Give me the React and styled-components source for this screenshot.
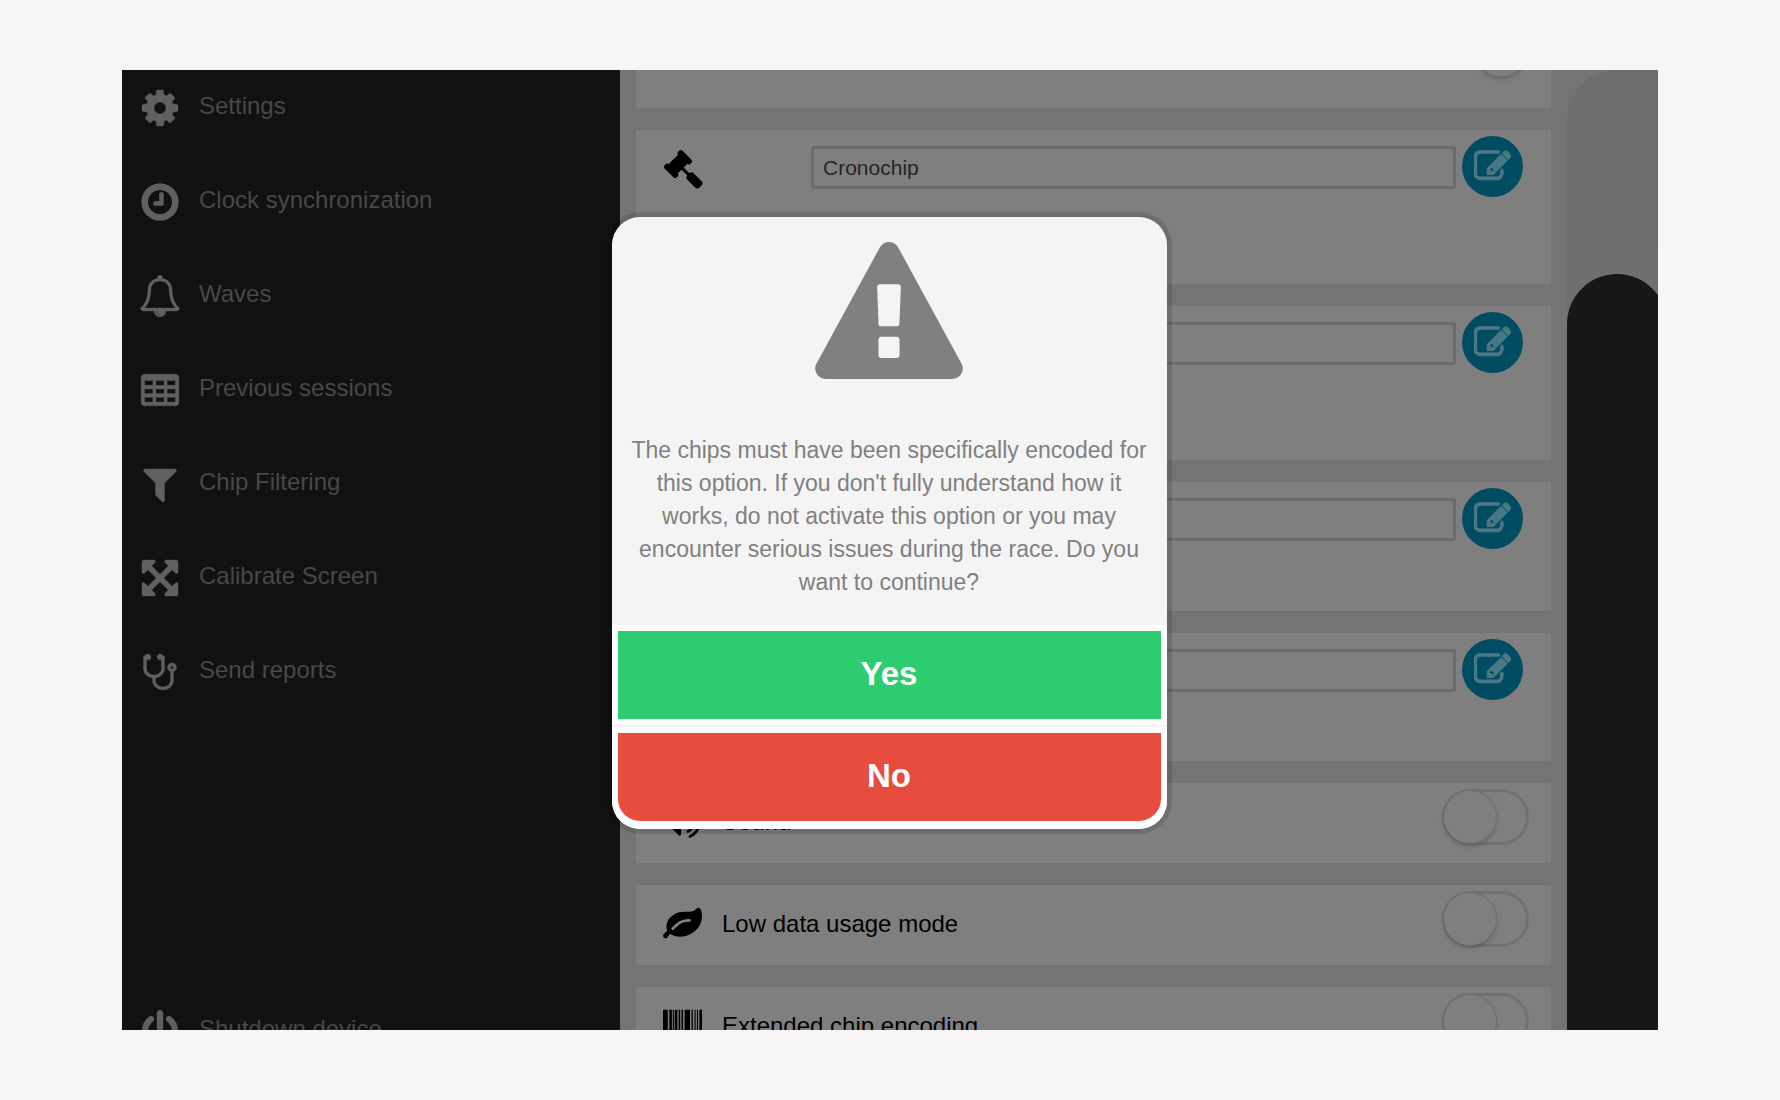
import React from "react";
import styled, { createGlobalStyle, css } from "styled-components";

const GlobalStyle = createGlobalStyle`
  *, *::before, *::after { box-sizing: border-box; }
  body {
    margin: 0;
    background: #f7f5f6;
    font-family: "Liberation Sans", Arial, sans-serif;
  }
  button, input { font: inherit; }
`;

const paths = {
  cog: "M1152 896q0-106-75-181t-181-75-181 75-75 181 75 181 181 75 181-75 75-181zm512-109v222q0 12-8 23t-20 13l-185 28q-19 54-39 91 35 50 107 138 10 12 10 25t-9 23q-27 37-99 108t-94 71q-12 0-26-9l-138-108q-44 23-91 38-16 136-29 186-7 28-36 28h-222q-14 0-24.500-8.500t-11.500-21.500l-28-184q-49-16-90-37l-141 107q-10 9-25 9-14 0-25-11-126-114-165-168-7-10-7-23 0-12 8-23 15-21 51-66.500t54-70.500q-27-50-41-99l-183-27q-13-2-21-12.500t-8-23.500v-222q0-12 8-23t19-13l186-28q14-46 39-92-40-57-107-138-10-12-10-24 0-10 9-23 26-36 98.500-107.500t94.500-71.500q13 0 26 10l138 107q44-23 91-38 16-136 29-186 7-28 36-28h222q14 0 24.500 8.500t11.500 21.500l28 184q49 16 90 37l142-107q9-9 24-9 13 0 25 10 129 119 165 170 7 8 7 22 0 12-8 23-15 21-51 66.500t-54 70.500q26 50 41 98l183 28q13 2 21 12.500t8 23.500z",
  clock: "M1024 544v448q0 14-9 23t-23 9h-320q-14 0-23-9t-9-23v-64q0-14 9-23t23-9h224v-352q0-14 9-23t23-9h64q14 0 23 9t9 23zm416 352q0-148-73-273t-198-198-273-73-273 73-198 198-73 273 73 273 198 198 273 73 273-73 198-198 73-273zm224 0q0 209-103 385.500t-279.500 279.500-385.500 103-385.500-103-279.500-279.500-103-385.500 103-385.500 279.500-279.500 385.500-103 385.500 103 279.500 279.500 103 385.500z",
  bell: "M912 1696q0-16-16-16-59 0-101.500-42.500t-42.500-101.500q0-16-16-16t-16 16q0 73 51.500 124.500t124.500 51.500q16 0 16-16zm-666-288h1300q-266-300-266-832 0-51-24-105t-69-103-121.500-80.500-169.500-31.500-169.500 31.500-121.500 80.500-69 103-24 105q0 532-266 832zm1482 0q0 52-38 90t-90 38h-448q0 106-75 181t-181 75-181-75-75-181h-448q-52 0-90-38t-38-90q50-42 91-88t85-119.500 74.500-158.500 50-206 19.500-260q0-152 117-282.500t307-158.500q-8-19-8-39 0-40 28-68t68-28 68 28 28 68q0 20-8 39 190 28 307 158.500t117 282.500q0 139 19.500 260t50 206 74.500 158.500 85 119.500 91 88z",
  table: "M1700 361v1070q0 58-41 99t-99 41h-1328q-58 0-99-41t-41-99v-1070q0-58 41-99t99-41h1328q58 0 99 41t41 99zM240 490v200h352v-200zM720 490v200h352v-200zM1200 490v200h352v-200zM240 850v200h352v-200zM720 850v200h352v-200zM1200 850v200h352v-200zM240 1210v200h352v-200zM720 1210v200h352v-200zM1200 1210v200h352v-200z",
  filter: "M1595 295q17 41-14 70l-493 493v742q0 42-39 59-13 5-25 5-27 0-45-19l-256-256q-19-19-19-45v-486l-493-493q-31-29-14-70 17-39 59-39h1280q42 0 59 39z",
  arrows: "M1411 541l-355 355 355 355 144-144q29-31 70-14 39 17 39 59v448q0 26-19 45t-45 19h-448q-42 0-59-40-17-39 14-69l144-144-355-355-355 355 144 144q31 30 14 69-17 40-59 40h-448q-26 0-45-19t-19-45v-448q0-42 40-59 39-17 69 14l144 144 355-355-355-355-144 144q-19 19-45 19-12 0-24-5-40-17-40-59v-448q0-26 19-45t45-19h448q42 0 59 40 17 39-14 69l-144 144 355 355 355-355-144-144q-31-30-14-69 17-40 59-40h448q26 0 45 19t19 45v448q0 42-39 59-13 5-25 5-26 0-45-19z",
  stethoscope: "M1472 704q0-26-19-45t-45-19-45 19-19 45 19 45 45 19 45-19 19-45zm128 0q0 62-35.500 111t-92.500 70v395q0 159-131.500 271.500t-316.500 112.500-316.500-112.500-131.500-271.500v-132q-164-20-274-128t-110-252v-512q0-26 19-45t45-19q6 0 16 2 17-30 47-48t65-18q53 0 90.500 37.500t37.500 90.500-37.500 90.500-90.500 37.500q-33 0-64-18v402q0 106 94 181t226 75 226-75 94-181v-402q-31 18-64 18-53 0-90.500-37.500t-37.500-90.500 37.500-90.500 90.500-37.500q35 0 65 18t47 48q10-2 16-2 26 0 45 19t19 45v512q0 144-110 252t-274 128v132q0 106 94 181t226 75 226-75 94-181v-395q-57-21-92.500-70t-35.500-111q0-80 56-136t136-56 136 56 56 136z",
  power: "M1664 896q0 156-61 298t-164 245-245 164-298 61-298-61-245-164-164-245-61-298q0-182 80.500-343t226.500-270q43-32 95.500-25t83.500 50q32 42 24.500 94.500t-49.500 84.500q-98 74-151.500 181t-53.500 228q0 104 40.500 198.500t109.500 163.500 163.500 109.500 198.500 40.500 198.500-40.500 163.500-109.500 109.500-163.500 40.500-198.500q0-121-53.500-228t-151.500-181q-42-32-49.500-84.500t24.500-94.500q31-43 84-50t95 25q146 109 226.500 270t80.500 343zm-640-768v640q0 52-38 90t-90 38-90-38-38-90v-640q0-52 38-90t90-38 90 38 38 90z",
  gavel: "M1771 1536q0 53-37 90l-107 108q-39 37-91 37-53 0-90-37l-363-364q-38-36-38-90 0-53 43-96l-256-256-126 126q-14 14-34 14t-34-14q2 2 12.500 12t12.500 13 10 11.500 10 13.500 6 13.500 5.500 16.500 1.500 18q0 38-28 68-3 3-16.500 18t-19 20.500-18.500 16.500-22 15.500-22 9-26 4.500q-40 0-68-28l-408-408q-28-28-28-68 0-13 4.500-26t9-22 15.500-22 16.500-18.500 20.500-19 18-16.500q30-28 68-28 10 0 18 1.500t16.500 5.500 13.500 6 13.500 10 11.500 10 13 12.500 12 12.500q-14-14-14-34t14-34l348-348q14-14 34-14t34 14q-2-2-12.500-12t-12.500-13-10-11.500-10-13.500-6-13.500-5.500-16.500-1.500-18q0-38 28-68 3-3 16.500-18t19-20.500 18.500-16.500 22-15.500 22-9 26-4.500q40 0 68 28l408 408q28 28 28 68 0 13-4.500 26t-9 22-15.500 22-16.500 18.500-20.500 19-18 16.500q-30 28-68 28-10 0-18-1.500t-16.500-5.500-13.500-6-13.500-10-11.500-10-13-12.500-12-12.500q14 14 14 34t-14 34l-126 126 256 256q43-43 96-43 52 0 91 37l363 363q37 39 37 91z",
  leaf: "M1280 704q0-26-19-45t-45-19q-172 0-318 49.500t-259.500 134-235.500 219.500q-19 21-19 45 0 26 19 45t45 19q24 0 45-19 27-24 74-71t67-66q137-124 268.500-176t313.500-52q26 0 45-19t19-45zm512-198q0 95-20 193-46 224-184.500 383t-357.500 268q-214 108-438 108-148 0-286-47-15-5-88-42t-96-37q-16 0-39.500 32t-45 70-52.500 70-60 32q-43 0-63.500-17.500t-45.500-59.500q-2-4-6-11t-5.500-10-3-9.500-1.500-13.500q0-35 31-73.500t68-65.500 68-56 31-48q0-4-14-38t-16-44q-9-51-9-104 0-115 43.500-220t119-184.500 170.500-139 204-95.500q55-18 145-25.500t179.500-9 178.500-6 163.500-24 113.500-56.500l29.500-29.500 29.500-28 27-20 36.500-16 43.500-4.500q39 0 70.500 46t47.500 112 24 124 8 96z",
  volume: "M832 352v1088q0 26-19 45t-45 19-45-19l-333-333h-262q-26 0-45-19t-19-45v-384q0-26 19-45t45-19h262l333-333q19-19 45-19t45 19 19 45zm384 544q0 76-42.500 141.500t-112.500 93.500q-10 5-25 5-26 0-45-18.500t-19-45.500q0-21 12-35.500t29-25 34-23 29-35.500 12-57-12-57-29-35.500-34-23-29-25-12-35.500q0-27 19-45.500t45-18.500q15 0 25 5 70 27 112.500 93t42.500 142zm256 0q0 153-85 282.500t-225 188.500q-13 5-25 5-27 0-46-19t-19-45q0-39 39-59 56-29 76-44 74-54 115.500-135.500t41.500-173.500-41.500-173.500-115.500-135.500q-20-15-76-44-39-20-39-59 0-26 19-45t45-19q13 0 26 5 140 59 225 188.500t85 282.500zm256 0q0 230-127 422.500t-338 283.500q-13 5-26 5-26 0-45-19t-19-45q0-36 39-59 7-4 22.500-10.500t22.500-10.500q46-25 82-51 123-91 192-227t69-289-69-289-192-227q-36-26-82-51-7-4-22.500-10.500t-22.500-10.500q-39-23-39-59 0-26 19-45t45-19q13 0 26 5 211 91 338 283.500t127 422.500z",
  barcode: "M0 128h220v1536h-220zM290 128h120v1536h-120zM450 128h50v1536h-50zM540 128h120v1536h-120zM720 128h70v1536h-70zM850 128h70v1536h-70zM990 128h250v1536h-250zM1310 128h60v1536h-60zM1450 128h50v1536h-50zM1560 128h50v1536h-50zM1672 128h120v1536h-120z",
  edit: "M888 1184l116-116-152-152-116 116v56h96v96h56zm440-720q-16-16-33 1l-350 350q-17 17-1 33t33-1l350-350q17-17 1-33zm80 594v190q0 119-84.500 203.500t-203.500 84.500h-832q-119 0-203.500-84.500t-84.500-203.500v-832q0-119 84.500-203.500t203.500-84.500h832q63 0 117 25 15 7 18 23 3 17-9 29l-49 49q-14 14-32 8-23-6-45-6h-832q-66 0-113 47t-47 113v832q0 66 47 113t113 47h832q66 0 113-47t47-113v-126q0-13 9-22l64-64q15-15 35-7t20 29zm-96-738l288 288-672 672h-288v-288zm444 132l-92 92-288-288 92-92q28-28 68-28t68 28l152 152q28 28 28 68t-28 68z",
  warning: "M1024 1375v-190q0-14-9.500-23.500t-22.500-9.500h-192q-13 0-22.500 9.500t-9.500 23.500v190q0 14 9.500 23.500t22.500 9.500h192q13 0 22.500-9.500t9.500-23.500zm-2-374l18-459q0-12-10-19-13-11-24-11h-220q-11 0-24 11-10 7-10 21l17 457q0 10 10 16.500t24 6.500h185q14 0 23.500-6.500t10.500-16.500zm-14-934l768 1408q35 63-2 126-17 29-46.500 46t-63.500 17h-1536q-34 0-63.500-17t-46.500-46q-37-63-2-126l768-1408q17-31 47-49t65-18 65 18 47 49z",
};

const Svg = styled.svg`
  display: block;
  flex: none;
  fill: currentColor;
  fill-rule: evenodd;
  stroke: currentColor;
  stroke-width: ${(p) => p.$weight};
`;

function Icon({ name, size, box = "0 0 1792 1792", height = size, weight = 0 }) {
  return (
    <Svg width={size} height={height} viewBox={box} $weight={weight} aria-hidden="true">
      <path d={paths[name]} />
    </Svg>
  );
}

const Page = styled.div`
  min-height: 100vh;
  padding: 70px 122px;
`;

const Screen = styled.div`
  display: flex;
  position: relative;
  height: calc(100vh - 140px);
  overflow: hidden;
  background: #747475;
`;

const Sidebar = styled.nav`
  display: flex;
  flex: none;
  flex-direction: column;
  gap: 54px;
  width: 498px;
  padding: 18px 17px;
  background: #111;
`;

const MenuLink = styled.a`
  display: flex;
  flex: none;
  align-items: center;
  gap: 18px;
  height: 40px;
  color: #484848;
  font-size: 24px;
  line-height: 36px;
  text-decoration: none;

  svg { color: #606060; }
`;

const Spacer = styled.div`
  flex: none;
  height: 211px;
`;

const MenuText = styled.span`
  padding-bottom: 4px;
`;

const Content = styled.main`
  display: flex;
  flex: 1;
  flex-direction: column;
  justify-content: flex-start;
  gap: 22px;
  min-width: 0;
  margin-top: -54px;
  padding: 0 16px;
`;

const Card = styled.section`
  display: flex;
  flex: none;
  align-items: flex-start;
  height: ${(p) => p.$height}px;
  padding: 6px 28px 0 27px;
  background: #7f7f7f;
  color: #000;
`;

const ToggleCard = styled(Card)`
  justify-content: flex-end;
  padding-right: 22px;
`;

const IconSlot = styled.div`
  display: flex;
  flex: none;
  align-items: center;
  width: 148px;
  height: 66px;
`;

const TextField = styled.input`
  flex: 1;
  min-width: 0;
  height: 43px;
  margin: 10px 6px 0 0;
  padding: 0 9px;
  border: 3px solid #6c6c6c;
  border-radius: 3px;
  background: transparent;
  color: #242424;
  font-size: 21px;
`;

const EditButton = styled.button`
  display: flex;
  flex: none;
  align-items: center;
  justify-content: center;
  width: 61px;
  height: 61px;
  padding: 0;
  border: 0;
  border-radius: 50%;
  background: #004c63;
  color: #4c7886;
`;

const ToggleLabel = styled.label`
  display: flex;
  flex: 1;
  align-items: center;
  gap: 20px;
  height: 66px;
  font-size: 24px;
`;

const Toggle = styled.input`
  appearance: none;
  flex: none;
  display: flex;
  width: 87px;
  height: 56px;
  margin: 0;
  border: 3px solid #717171;
  border-radius: 28px;

  &::before {
    content: "";
    width: 52px;
    height: 52px;
    margin: -1px;
    border-radius: 50%;
    background: #7f7f7f;
    box-shadow: 0 0 0 1px #707070, 0 3px 5px rgba(0, 0, 0, 0.2);
  }

  ${(p) => p.$bare && css`
    justify-content: flex-end;
    border-color: transparent;
  `}
`;

const ScrollTrack = styled.div`
  flex: none;
  width: 91px;
  height: 100%;
`;

const ScrollBody = styled.div`
  width: 100px;
  height: 100%;
  padding-top: 204px;
  border-radius: 50px 0 0 0;
  background: linear-gradient(215deg, #6d6d70 0, #6e706f 180px, #6e706f 100%);
`;

const ScrollThumb = styled.div`
  height: 100%;
  border-radius: 50px 50px 0 0;
  background: #171717;
`;

const Overlay = styled.div`
  position: absolute;
  inset: 0;
  display: flex;
  align-items: flex-start;
  justify-content: center;
  padding: 147px 2px 0 0;
`;

const Dialog = styled.div`
  width: 555px;
  overflow: hidden;
  border-radius: 28px;
  background: #f4f4f4;
  box-shadow: 0 0 1px 5px rgba(0, 0, 0, 0.13);
`;

const Message = styled.div`
  display: flex;
  flex-direction: column;
  align-items: center;
  gap: 55px;
  padding: 25px 14px 26px;
  color: #808080;
`;

const MessageText = styled.p`
  margin: 0;
  font-size: 23px;
  line-height: 33px;
  text-align: center;
`;

const Actions = styled.div`
  display: grid;
  gap: 2px;
`;

const ActionSlot = styled.div`
  padding: 6px;
  background: #fff;

  &:last-child { padding-bottom: 8px; }
`;

const ActionButton = styled.button`
  display: block;
  width: 100%;
  height: 88px;
  padding: 0 0 2px;
  border: 0;
  border-radius: ${(p) => (p.$last ? "0 0 22px 22px" : "0")};
  background: ${(p) => p.$color};
  color: #fff;
  font-size: 33px;
  font-weight: 700;
`;

const menu = [
  ["cog", "Settings"],
  ["clock", "Clock synchronization"],
  ["bell", "Waves"],
  ["table", "Previous sessions"],
  ["filter", "Chip Filtering"],
  ["arrows", "Calibrate Screen"],
  ["stethoscope", "Send reports"],
];

const fields = [
  { height: 154, icon: "gavel", value: "Cronochip" },
  { height: 154, value: "" },
  { height: 129, value: "" },
  { height: 128, value: "" },
];

const toggles = [
  ["volume", "Sound"],
  ["leaf", "Low data usage mode"],
  ["barcode", "Extended chip encoding"],
];

function MenuItem({ icon, text }) {
  return (
    <MenuLink href="#">
      <Icon name={icon} size={42} weight={icon === "clock" ? 60 : 16} />
      <MenuText>{text}</MenuText>
    </MenuLink>
  );
}

export default function App() {
  return (
    <Page>
      <GlobalStyle />
      <Screen>
        <Sidebar>
          {menu.map(([icon, text]) => (
            <MenuItem key={text} icon={icon} text={text} />
          ))}
          <Spacer />
          <MenuItem icon="power" text="Shutdown device" />
        </Sidebar>
        <Content>
          <ToggleCard $height={92}>
            <Toggle type="checkbox" role="switch" $bare defaultChecked aria-label="Enabled" />
          </ToggleCard>
          {fields.map((field, i) => (
            <Card key={i} $height={field.height}>
              <IconSlot>{field.icon && <Icon name={field.icon} size={40} />}</IconSlot>
              <TextField aria-label={`Field ${i + 1}`} defaultValue={field.value} />
              <EditButton type="button" aria-label="Edit">
                <Icon name="edit" size={37} weight={50} />
              </EditButton>
            </Card>
          ))}
          {toggles.map(([icon, text]) => (
            <ToggleCard key={text} $height={80}>
              <ToggleLabel htmlFor={icon}>
                <Icon name={icon} size={39} />
                {text}
              </ToggleLabel>
              <Toggle type="checkbox" role="switch" id={icon} />
            </ToggleCard>
          ))}
        </Content>
        <ScrollTrack>
          <ScrollBody>
            <ScrollThumb />
          </ScrollBody>
        </ScrollTrack>
        <Overlay>
          <Dialog role="alertdialog" aria-modal="true" aria-describedby="message">
            <Message>
              <Icon name="warning" size={148} height={137} box="0 0 1792 1664" />
              <MessageText id="message">
                The chips must have been specifically encoded for this option. If you
                don't fully understand how it works, do not activate this option or you
                may encounter serious issues during the race. Do you want to continue?
              </MessageText>
            </Message>
            <Actions>
              <ActionSlot>
                <ActionButton type="button" $color="#2ecc71">Yes</ActionButton>
              </ActionSlot>
              <ActionSlot>
                <ActionButton type="button" $color="#e74c3c" $last>No</ActionButton>
              </ActionSlot>
            </Actions>
          </Dialog>
        </Overlay>
      </Screen>
    </Page>
  );
}
